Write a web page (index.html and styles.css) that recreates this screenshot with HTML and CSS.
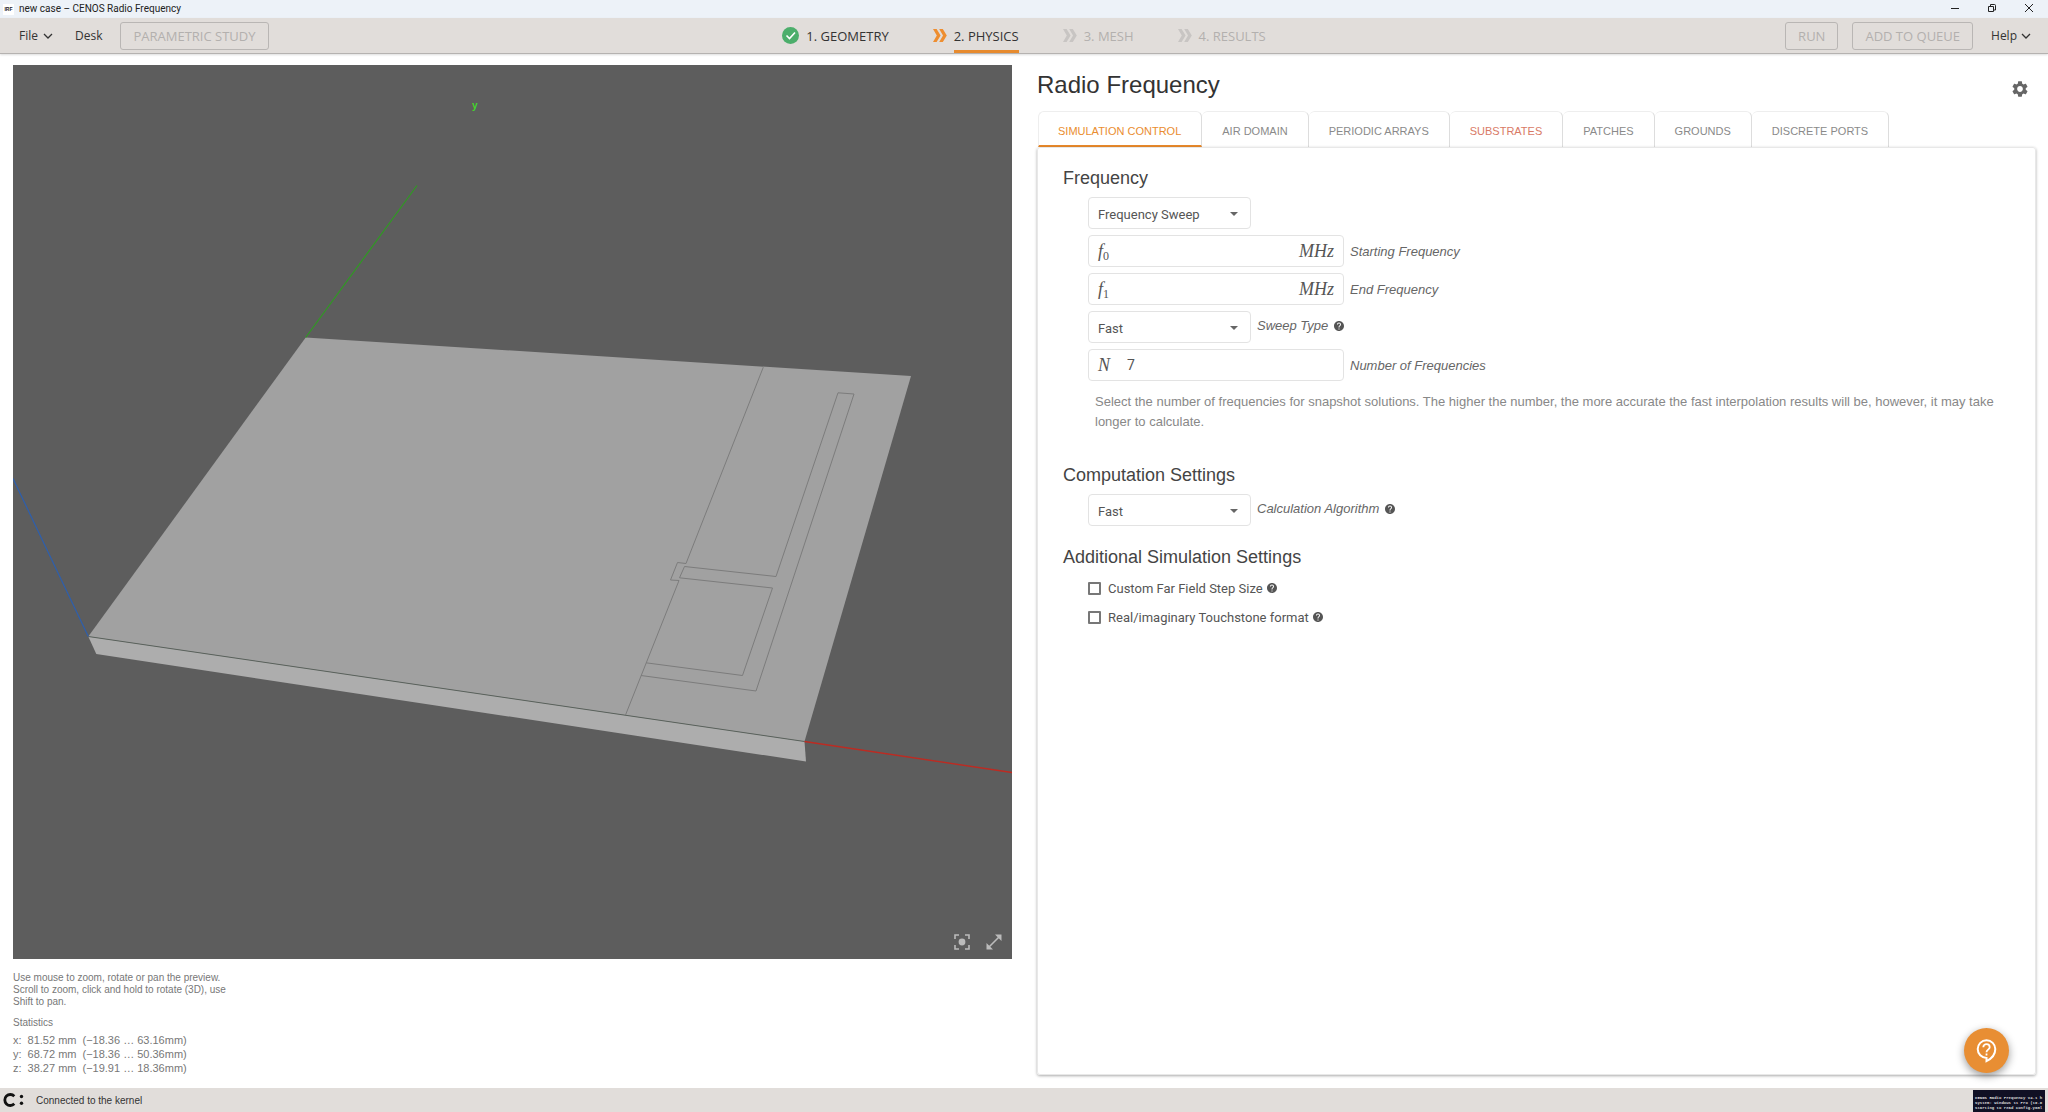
FILE: index.html
```html
<!DOCTYPE html>
<html lang="en">
<head>
<meta charset="utf-8">
<title>new case – CENOS Radio Frequency</title>
<link rel="stylesheet" href="styles.css">
</head>
<body>
<svg class="defs" aria-hidden="true">
  <symbol id="chevron" viewBox="0 0 10 6"><path d="M1 1l4 4 4-4" fill="none" stroke="currentColor" stroke-width="1.3"/></symbol>
  <symbol id="double" viewBox="0 0 14 13"><path d="M0 0h3.600l4 6.500-4 6.500H0l3.800-6.500zM6.200 0h3.600l4 6.500-4 6.500H6.200l3.800-6.500z" fill="currentColor"/></symbol>
  <symbol id="help" viewBox="2 2 20 20"><path d="M12 2C6.480 2 2 6.480 2 12s4.480 10 10 10 10-4.480 10-10S17.520 2 12 2zm1 17h-2v-2h2v2zm2.070-7.750l-.9.920C13.450 12.900 13 13.500 13 15h-2v-.5c0-1.100.45-2.100 1.170-2.830l1.240-1.260c.37-.36.59-.86.59-1.410 0-1.100-.9-2-2-2s-2 .9-2 2H8c0-2.210 1.790-4 4-4s4 1.790 4 4c0 .88-.36 1.680-.93 2.250z" fill="currentColor"/></symbol>
</svg>

<header class="titlebar">
  <span class="app-icon">IRF</span>
  <span class="title">new case – CENOS Radio Frequency</span>
  <div class="window-buttons">
    <button type="button" aria-label="Minimize"><svg width="8" height="8" viewBox="0 0 8 8"><path d="M0 4.500h8" stroke="#222" fill="none"/></svg></button>
    <button type="button" aria-label="Restore"><svg width="8" height="8" viewBox="0 0 8 8"><path d="M.5 2.500h5v5h-5zM2.500 2V.5h4Q7.500.5 7.500 1.500v4.500H6" stroke="#222" fill="none"/></svg></button>
    <button type="button" aria-label="Close"><svg width="8" height="8" viewBox="0 0 8 8"><path d="M0 0l8 8M8 0L0 8" stroke="#222" fill="none"/></svg></button>
  </div>
</header>

<nav class="toolbar">
  <div class="tools">
    <button type="button" class="menu file">File <svg width="10" height="6"><use href="#chevron"/></svg></button>
    <button type="button" class="menu desk">Desk</button>
    <button type="button" class="action" disabled>PARAMETRIC STUDY</button>
  </div>
  <div class="steps">
    <a class="step" href="#geometry"><svg width="17" height="17" viewBox="0 0 17 17"><circle cx="8.500" cy="8.500" r="8.500" fill="#4cae6b"/><path d="M4.500 8.500l3 3 5.500-6" stroke="#fff" stroke-width="1.600" fill="none"/></svg><span>1. GEOMETRY</span></a>
    <a class="step current" href="#physics"><svg width="14" height="13"><use href="#double"/></svg><span>2. PHYSICS</span></a>
    <a class="step pending" href="#mesh"><svg width="14" height="13"><use href="#double"/></svg><span>3. MESH</span></a>
    <a class="step pending" href="#results"><svg width="14" height="13"><use href="#double"/></svg><span>4. RESULTS</span></a>
  </div>
  <div class="tools end">
    <button type="button" class="action" disabled>RUN</button>
    <button type="button" class="action" disabled>ADD TO QUEUE</button>
    <button type="button" class="menu help-menu">Help <svg width="10" height="6"><use href="#chevron"/></svg></button>
  </div>
</nav>

<main class="workspace">
  <section class="preview">
    <div class="viewport">
      <svg class="scene" viewBox="13 65 999 895" preserveAspectRatio="xMidYMid slice" role="img" aria-label="3D preview">
        <path d="M305.700 338L911 376.500 804.500 742 88.300 637z" fill="#a1a1a1"/>
        <path d="M88.300 637L804.500 742l1.500 20L96.300 654.500z" fill="#adadad"/>
        <path d="M88.300 637L804.500 742" stroke="#5a625c" fill="none"/>
        <g fill="none" stroke="#7c7c7c">
          <path d="M763.300 367.700L686 564l-8.500-1-7 17.500 8.500.5-53.500 134.500"/>
          <path d="M646 663.300l96.500 12.700 30-87.500-93-10.200 5-11.300 91.500 10 62-183.700 16 1.200-98 297L641 676"/>
        </g>
        <path d="M305.700 338L417 186" stroke="#2f9a22" fill="none" stroke-width="1.200"/>
        <path d="M13 479l75.300 158" stroke="#2d5fae" fill="none" stroke-width="1.200"/>
        <path d="M804.500 742L1012 773" stroke="#bd2b22" fill="none" stroke-width="1.400"/>
        <text x="472" y="109" class="axis-y">y</text>
      </svg>
      <div class="view-buttons">
        <button type="button" aria-label="Fit view"><svg width="16" height="16" viewBox="0 0 16 16"><path d="M1 5V1h4M11 1h4v4M15 11v4h-4M5 15H1v-4" fill="none" stroke="#bbb" stroke-width="1.600"/><circle cx="8" cy="8" r="3.400" fill="#bbb"/></svg></button>
        <button type="button" aria-label="Full screen"><svg width="16" height="16" viewBox="0 0 16 16"><path d="M2.500 13.500l11-11" stroke="#bbb" stroke-width="1.600"/><path d="M9 .5h6.500V7zM.5 9v6.500H7z" fill="#bbb"/></svg></button>
      </div>
    </div>
    <p class="hint">Use mouse to zoom, rotate or pan the preview.<br>Scroll to zoom, click and hold to rotate (3D), use<br>Shift to pan.</p>
    <h2 class="stats-title">Statistics</h2>
    <table class="stats">
      <tr><th scope="row">x:</th><td>81.52 mm</td><td>(−18.36 … 63.16mm)</td></tr>
      <tr><th scope="row">y:</th><td>68.72 mm</td><td>(−18.36 … 50.36mm)</td></tr>
      <tr><th scope="row">z:</th><td>38.27 mm</td><td>(−19.91 … 18.36mm)</td></tr>
    </table>
  </section>

  <section class="settings">
    <div class="settings-head">
      <h1>Radio Frequency</h1>
      <button type="button" class="gear" aria-label="Settings"><svg width="16" height="16" viewBox="2 2 20 20"><path fill="#666" d="M19.140 12.940c.04-.3.06-.61.06-.94 0-.32-.02-.64-.07-.94l2.030-1.580c.18-.14.23-.41.12-.61l-1.920-3.320c-.12-.22-.37-.29-.59-.22l-2.390.96c-.5-.38-1.030-.7-1.620-.94l-.36-2.540c-.04-.24-.24-.41-.48-.41h-3.840c-.24 0-.43.17-.47.41l-.36 2.540c-.59.24-1.130.57-1.620.94l-2.390-.96c-.22-.08-.47 0-.59.22L2.740 8.870c-.12.21-.08.47.12.61l2.030 1.580c-.05.3-.09.63-.09.94s.02.64.07.94l-2.030 1.580c-.18.14-.23.41-.12.61l1.920 3.320c.12.22.37.29.59.22l2.390-.96c.5.38 1.030.7 1.620.94l.36 2.540c.05.24.24.41.48.41h3.840c.24 0 .44-.17.47-.41l.36-2.540c.59-.24 1.130-.56 1.620-.94l2.390.96c.22.08.47 0 .59-.22l1.920-3.320c.12-.22.07-.47-.12-.61l-2.010-1.580zM12 15.600c-1.980 0-3.600-1.620-3.600-3.600s1.620-3.600 3.600-3.600 3.600 1.620 3.600 3.600-1.620 3.600-3.600 3.600z"/></svg></button>
    </div>
    <nav class="tabs">
      <a class="tab active" href="#simulation">SIMULATION CONTROL</a>
      <a class="tab" href="#air">AIR DOMAIN</a>
      <a class="tab" href="#arrays">PERIODIC ARRAYS</a>
      <a class="tab invalid" href="#substrates">SUBSTRATES</a>
      <a class="tab" href="#patches">PATCHES</a>
      <a class="tab" href="#grounds">GROUNDS</a>
      <a class="tab" href="#ports">DISCRETE PORTS</a>
    </nav>
    <form class="card">
      <h2>Frequency</h2>
      <div class="fields">
        <div class="row"><div class="select"><select aria-label="Frequency mode"><option>Frequency Sweep</option></select></div></div>
        <div class="row"><div class="input"><span class="math">f<sub>0</sub></span><input id="f0" type="text"><span class="math">MHz</span></div><label for="f0">Starting Frequency</label></div>
        <div class="row"><div class="input"><span class="math">f<sub>1</sub></span><input id="f1" type="text"><span class="math">MHz</span></div><label for="f1">End Frequency</label></div>
        <div class="row"><div class="select"><select id="sweep"><option>Fast</option></select></div><label for="sweep">Sweep Type</label><svg class="help" width="10" height="10"><use href="#help"/></svg></div>
        <div class="row"><div class="input"><span class="math">N</span><input id="count" type="text" value="7"></div><label for="count">Number of Frequencies</label></div>
      </div>
      <p class="description">Select the number of frequencies for snapshot solutions. The higher the number, the more accurate the fast interpolation results will be, however, it may take longer to calculate.</p>
      <h2>Computation Settings</h2>
      <div class="fields">
        <div class="row"><div class="select"><select id="algo"><option>Fast</option></select></div><label for="algo">Calculation Algorithm</label><svg class="help" width="10" height="10"><use href="#help"/></svg></div>
      </div>
      <h2>Additional Simulation Settings</h2>
      <div class="checks">
        <div class="check"><input type="checkbox" id="far"><label for="far">Custom Far Field Step Size</label><svg width="10" height="10"><use href="#help"/></svg></div>
        <div class="check"><input type="checkbox" id="touch"><label for="touch">Real/imaginary Touchstone format</label><svg width="10" height="10"><use href="#help"/></svg></div>
      </div>
      <button type="button" class="fab" aria-label="Support"><svg width="21" height="24" viewBox="0 0 21 24"><path d="M10.500 1.300a8.800 8.800 0 1 0 0 17.600v3.300c5-2.400 8.800-6.800 8.800-12.100a8.800 8.800 0 0 0-8.800-8.800z" fill="none" stroke="#fff" stroke-width="2"/><path d="M7.300 8.200c0-4.100 6.400-4.100 6.400 0 0 2.300-3.200 2.600-3.200 5M10.500 14.600v2" fill="none" stroke="#fff" stroke-width="1.800"/></svg></button>
    </form>
  </section>
</main>

<footer class="statusbar">
  <svg width="21" height="14" viewBox="0 0 21 14" role="img" aria-label="CENOS"><path d="M11.300 3.200A5.500 5.500 0 1 0 11.300 10.800" fill="none" stroke="#111" stroke-width="2.800"/><circle cx="18.500" cy="3.500" r="1.700" fill="#111"/><circle cx="18.500" cy="10.200" r="1.700" fill="#111"/></svg>
  <span>Connected to the kernel</span>
  <pre class="console">CENOS Radio Frequency v4.1 h
System: Windows 11 Pro (10.0
Starting to read config.yaml</pre>
</footer>
</body>
</html>
```
FILE: styles.css
```css
* { box-sizing: border-box; }
body {
  margin: 0;
  height: 100vh;
  display: flex;
  flex-direction: column;
  background: #fff;
  color: #333;
  font-family: "Liberation Sans", Arial, sans-serif;
  font-size: 14px;
}
button { font: inherit; color: inherit; background: none; border: 0; padding: 0; }
svg { display: block; flex: none; }
a { color: inherit; text-decoration: none; }
h1, h2, p { margin: 0; font-weight: 400; }
.defs { position: absolute; width: 0; height: 0; }

.titlebar {
  display: flex;
  align-items: center;
  height: 18px;
  padding: 0 15px 0 3px;
  gap: 5px;
  background: #edf2f8;
  color: #222;
  font: 10px/16px Roboto, sans-serif;
}
.app-icon {
  width: 11px;
  height: 11px;
  background: #fff;
  font: bold 5px/10px "Liberation Sans", sans-serif;
  text-align: center;
}
.window-buttons { display: flex; gap: 29px; margin-left: auto; }
.window-buttons svg { margin-bottom: 2px; }

.toolbar {
  display: grid;
  grid-template-columns: 1fr auto 1fr;
  height: 36px;
  flex: none;
  background: #e1ddda;
  border-bottom: 1px solid #b5b2b0;
  box-shadow: 0 1px 2px #0002;
  font: 13px/20px "Open Sans", sans-serif;
}
.tools { display: flex; align-items: center; padding-left: 19px; }
.tools.end { justify-content: flex-end; gap: 14px; padding: 0 17px 0 0; }
.menu { display: flex; align-items: center; gap: 5px; font-size: 12px; color: #333; }
.desk { margin: 0 18px 0 22px; }
.help-menu { margin-left: 4px; gap: 4px; }
.action {
  height: 28px;
  padding: 0 12px;
  border: 1px solid #b9b6b4;
  border-radius: 3px;
  color: #b3b0ae;
}
.steps { display: flex; gap: 44px; }
.step { display: flex; align-items: center; gap: 7px; color: #333; }
.step span { display: flex; align-items: center; height: 35px; border-bottom: 3px solid transparent; padding-top: 3px; }
.current svg { color: #ee8e30; }
.current span { border-color: #e78b2f; }
.pending { color: #b3b0ae; }
.pending svg { color: #c8c5c3; }

.workspace {
  flex: 1;
  min-height: 0;
  display: grid;
  grid-template-columns: 1fr 1fr;
  gap: 25px;
  padding: 11px 12px 13px 13px;
}
.preview { display: flex; flex-direction: column; color: #777; font-size: 10px; line-height: 12px; min-height: 0; }
.viewport { position: relative; flex: 1; min-height: 0; background: #5d5d5d; margin-bottom: 13px; }
.scene { width: 100%; height: 100%; }
.axis-y { fill: #44d62c; font: bold 10px "Liberation Sans", sans-serif; }
.view-buttons { position: absolute; right: 10px; bottom: 9px; display: flex; gap: 16px; }
.stats-title { margin: 9px 0 4px; font-size: 10px; }
.stats { align-self: flex-start; border-collapse: collapse; font-size: 11px; line-height: 14px; }
.stats th, .stats td { padding: 0 6px 0 0; font-weight: 400; text-align: left; }

.settings { display: flex; flex-direction: column; min-width: 0; }
.settings-head { display: flex; justify-content: space-between; height: 46px; padding-right: 8px; }
h1 { font-size: 24px; line-height: 40px; color: #333; }
.gear { height: 48px; }
.tabs { display: flex; padding-left: 1px; }
.tab {
  height: 36px;
  padding: 3px 20px 0;
  border-top: 1px solid #eee;
  border-right: 1px solid #ddd;
  border-radius: 6px 6px 0 0;
  color: #8a8a8a;
  font-size: 11px;
  line-height: 32px;
}
.tab.active { padding-left: 19px; color: #ea8d2f; border-left: 1px solid #eee; border-bottom: 2px solid #e8892b; border-bottom-left-radius: 0; }
.tab.invalid { color: #d97a66; }
.card {
  position: relative;
  flex: 1;
  padding: 18px 40px 0 25px;
  border: 1px solid #e8e8e8;
  border-radius: 3px;
  box-shadow: 0 1px 3px #0005;
}
.card h2 { font-size: 18px; line-height: 24px; color: #444; }
.fields { display: flex; flex-direction: column; gap: 6px; padding: 7px 0 0 25px; }
.row { display: flex; align-items: center; gap: 6px; }
.row label { font-size: 13px; font-style: italic; color: #666; }
.select ~ label, .row .help { margin-bottom: 3px; }
.select { position: relative; width: 163px; }
.select::after {
  content: "";
  position: absolute;
  right: 13px;
  top: 15px;
  border: 4px solid transparent;
  border-top-color: #666;
  border-bottom: 0;
}
.select select {
  appearance: none;
  width: 100%;
  height: 32px;
  padding: 2px 9px 0;
  border: 1px solid #e3e3e3;
  border-radius: 4px;
  background: #fff;
  color: #555;
  font: 13px Roboto, sans-serif;
}
.input { display: flex; align-items: center; width: 256px; height: 32px; padding: 0 9px; border: 1px solid #e3e3e3; border-radius: 4px; }
.input input { flex: 1; min-width: 0; border: 0; padding: 0 0 0 17px; outline: 0; background: none; color: #555; font: 14px Roboto, sans-serif; }
.math { font: italic 18px/20px "Liberation Serif", serif; color: #555; }
.math sub { font-size: 12px; font-style: normal; line-height: 0; vertical-align: -3px; }
.help, .check svg { color: #555; }
.description { margin: 11px 0 31px 32px; color: #888; font-size: 13px; line-height: 20px; }
.fields + h2 { margin-top: 19px; }
.checks { display: flex; flex-direction: column; gap: 9px; padding: 9px 0 0 25px; }
.check { display: flex; align-items: center; gap: 4px; height: 20px; font: 13px Roboto, sans-serif; color: #555; }
.check input { appearance: none; width: 13px; height: 13px; margin: 0 3px 0 0; border: 2px solid #777; border-radius: 1px; }
.fab {
  position: absolute;
  right: 26px;
  bottom: 1px;
  width: 45px;
  height: 45px;
  display: grid;
  place-items: center;
  border-radius: 50%;
  background: #e88e33;
  box-shadow: 0 3px 8px #0006;
}

.statusbar {
  display: flex;
  align-items: center;
  flex: none;
  height: 24px;
  gap: 12px;
  padding: 0 3px;
  background: #e1ddda;
  color: #333;
  font-size: 10px;
}
.console {
  align-self: flex-end;
  width: 72px;
  height: 22px;
  margin: 0 0 0 auto;
  padding: 6px 2px 0;
  background: #101024;
  color: #ddd;
  font: bold 4px/5px "Liberation Mono", monospace;
}
```
